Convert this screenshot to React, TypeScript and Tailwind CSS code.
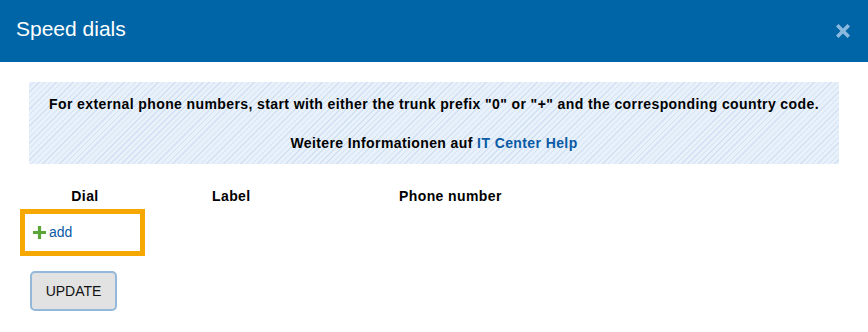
export default function App() {
  return (
    <div className="w-[868px] h-[332px] bg-white font-['Liberation_Sans',Arial,sans-serif] text-[13px] text-black overflow-hidden">
      {/* Header */}
      <div className="h-[62px] bg-[#0065a6] flex items-center justify-between pl-4 pr-[18px]">
        <h1 className="text-[21px] text-white leading-none -mt-[6px]">Speed dials</h1>
        <svg width="14" height="14" viewBox="0 0 14 14" className="-mt-[1px]">
          <path d="M2.5 2.5 L11.5 11.5 M11.5 2.5 L2.5 11.5" stroke="#8bb8de" strokeWidth="3.6" strokeLinecap="square" />
        </svg>
      </div>

      {/* Info box */}
      <div className="mx-[29px] mt-[20px] h-[82px] bg-[repeating-linear-gradient(135deg,#e8f0fa_0px,#e8f0fa_3px,#d2e1f3_3px,#d2e1f3_4px)] flex flex-col items-center font-bold text-[14px] tracking-[0.4px] pt-[14px]">
        <p className="leading-[17px]">
          For external phone numbers, start with either the trunk prefix "0" or "+" and the corresponding country code.
        </p>
        <p className="leading-[17px] mt-[22px]">
          Weitere Informationen auf <a className="text-[#0a5aa5]">IT Center Help</a>
        </p>
      </div>

      {/* Table */}
      <div className="pl-[20px] mt-[24px]">
        <div className="flex font-bold text-[14px] tracking-[0.4px] leading-[17px]">
          <div className="w-[130px] text-center">Dial</div>
          <div className="w-[249px] pl-[62px]">Label</div>
          <div>Phone number</div>
        </div>
        <div className="mt-[4px] w-[125px] h-[47px] border-[5px] border-[#f7a800] flex items-center pl-[8px] gap-[3px]">
          <svg width="13" height="13" viewBox="0 0 13 13" className="-mt-[1px]">
            <path d="M6.5 0 V13 M0 6.5 H13" stroke="#5aa637" strokeWidth="3.2" />
          </svg>
          <span className="text-[#0a5aa5] text-[14px] leading-none -mt-[1px]">add</span>
        </div>
        <button className="mt-[15px] ml-[10px] w-[87px] h-[40px] rounded-[5px] border-2 border-[#94b8d9] bg-[#e2e2e2] text-[14px] text-[#111]">
          UPDATE
        </button>
      </div>
    </div>
  );
}
